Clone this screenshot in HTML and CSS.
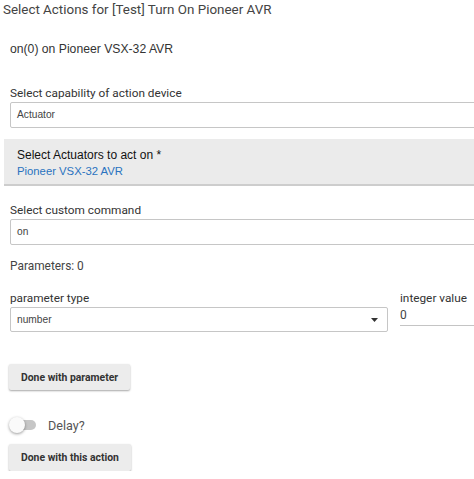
FILE: index.html
```html
<!DOCTYPE html>
<html>
<head>
<meta charset="utf-8">
<link rel="stylesheet" href="styles.css">
</head>
<body>
<div class="page">
  <h1 class="title">Select Actions for [Test] Turn On Pioneer AVR</h1>
  <div class="summary">on(0) on Pioneer VSX-32 AVR</div>

  <div class="field cap">
    <div class="label">Select capability of action device</div>
    <div class="input">Actuator</div>
  </div>

  <div class="devpick">
    <div class="devlabel">Select Actuators to act on *</div>
    <div class="devlink">Pioneer VSX-32 AVR</div>
  </div>

  <div class="field cmd">
    <div class="label">Select custom command</div>
    <div class="input">on</div>
  </div>

  <div class="params">Parameters: 0</div>

  <div class="paramrow">
    <div class="ptype">
      <div class="label">parameter type</div>
      <div class="select">
        <span>number</span>
        <svg class="caret" width="7" height="4" viewBox="0 0 7 4"><path d="M0 0h7L3.5 4z" fill="#333"/></svg>
      </div>
    </div>
    <div class="pval">
      <div class="label">integer value</div>
      <div class="underline">0</div>
    </div>
  </div>

  <button class="btn btn-param">Done with parameter</button>

  <div class="toggle-row">
    <span class="toggle"><span class="track"></span><span class="knob"></span></span>
    <span class="toggle-label">Delay?</span>
  </div>

  <button class="btn btn-action">Done with this action</button>
</div>
</body>
</html>
```

FILE: styles.css
```css
html, body {
  margin: 0;
  padding: 0;
  background: #fff;
  overflow: hidden;
}
body {
  font-family: Roboto, "Liberation Sans", sans-serif;
  color: #444;
}
.page {
  width: 490px;
}
.title {
  margin: 0;
  padding: 0 0 0 3px;
  font-size: 13.4px;
  font-weight: 400;
  line-height: 20px;
  color: #444;
}
.summary {
  margin-top: 21px;
  padding-left: 10px;
  font-family: "Liberation Sans", Arial, sans-serif;
  font-size: 12.2px;
  line-height: 16px;
  color: #333;
}
.field {
  padding-left: 10px;
}
.cap {
  margin-top: 29px;
}
.cmd {
  margin-top: 17px;
}
.label {
  font-size: 11.8px;
  line-height: 14px;
  color: #333;
  white-space: nowrap;
}
.input {
  margin-top: 2px;
  height: 26px;
  box-sizing: border-box;
  border: 1px solid #c6c6c6;
  border-radius: 2px;
  padding: 0 0 0 6px;
  font-family: "Liberation Sans", Arial, sans-serif;
  font-size: 10.2px;
  line-height: 24px;
  color: #444;
}
.devpick {
  margin: 11px 0 0 4px;
  height: 47px;
  box-sizing: border-box;
  background: #ebebeb;
  border-bottom: 2px solid #cdcdcd;
  padding: 8px 0 0 13px;
  font-family: "Liberation Sans", Arial, sans-serif;
}
.devlabel {
  font-size: 12px;
  line-height: 16px;
  color: #111;
}
.devlink {
  font-size: 11.3px;
  line-height: 16px;
  color: #2a73c0;
}
.params {
  margin-top: 14px;
  padding-left: 10px;
  font-size: 11.9px;
  line-height: 14px;
  color: #444;
}
.paramrow {
  display: flex;
  margin-top: 18px;
  padding-left: 10px;
  gap: 12px;
}
.ptype {
  width: 378px;
}
.select {
  margin-top: 2px;
  height: 25px;
  box-sizing: border-box;
  border: 1px solid #c6c6c6;
  border-radius: 2px;
  padding: 0 9px 0 6px;
  display: flex;
  align-items: center;
  justify-content: space-between;
  font-family: "Liberation Sans", Arial, sans-serif;
  font-size: 10.2px;
  color: #444;
}
.caret {
  display: block;
}
.pval {
  flex: 1;
}
.underline {
  margin-top: 3px;
  line-height: 14px;
  padding-bottom: 3px;
  border-bottom: 1px solid #c4c4c4;
  font-size: 12px;
  color: #444;
}
.btn {
  display: block;
  margin-left: 9px;
  height: 26px;
  padding: 0 12px;
  border: none;
  border-radius: 2px;
  background: #ececec;
  box-shadow: 0 1px 2px rgba(0,0,0,0.35);
  font-family: Roboto, sans-serif;
  font-weight: 700;
  font-size: 10.4px;
  color: #333;
}
.btn-param {
  margin-top: 32px;
}
.btn-action {
  margin-top: 9px;
  height: 27px;
}
.toggle-row {
  display: flex;
  align-items: center;
  margin-top: 25px;
  padding-left: 9px;
  height: 20px;
}
.toggle {
  position: relative;
  width: 27px;
  height: 20px;
}
.track {
  position: absolute;
  left: 6px;
  top: 5px;
  width: 21px;
  height: 10px;
  border-radius: 5px;
  background: #c6c6c6;
}
.knob {
  position: absolute;
  left: 0;
  top: 2px;
  width: 16px;
  height: 16px;
  border-radius: 50%;
  background: #fafafa;
  box-shadow: 0 1px 3px rgba(0,0,0,0.4);
}
.toggle-label {
  margin-left: 12px;
  font-size: 12.6px;
  color: #555;
}
```
